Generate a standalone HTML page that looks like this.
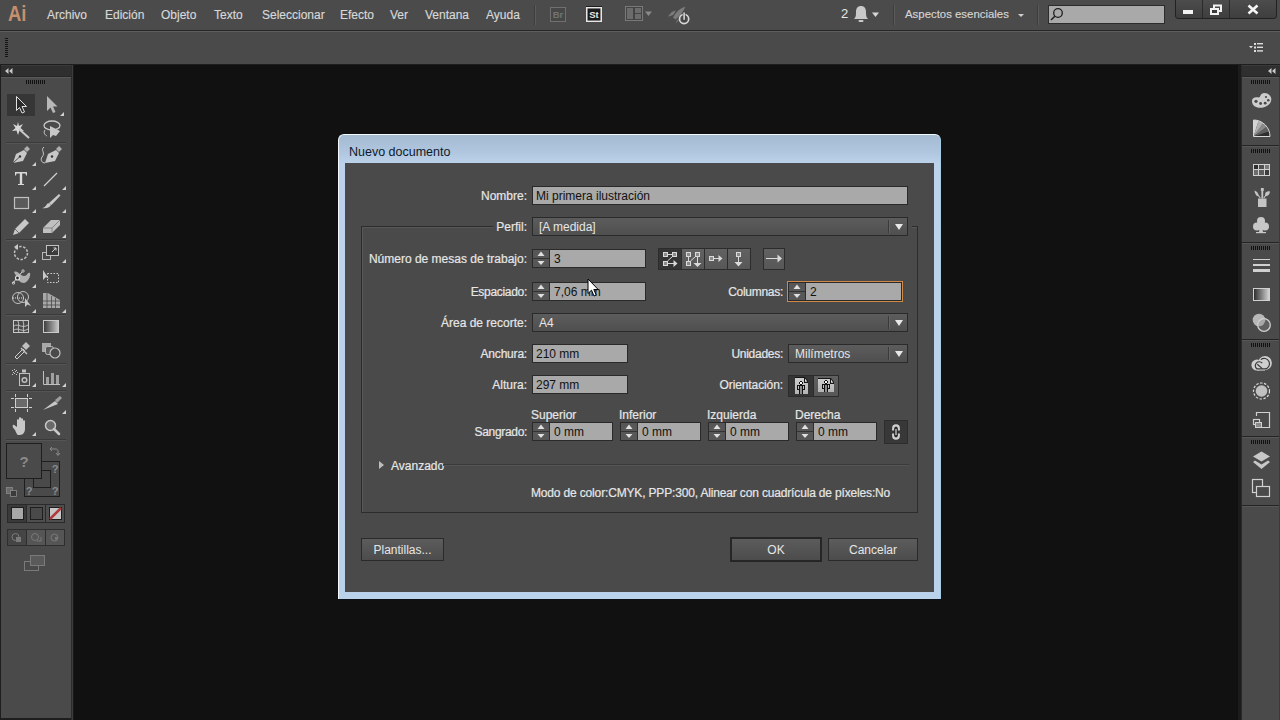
<!DOCTYPE html>
<html><head><meta charset="utf-8">
<style>
*{margin:0;padding:0;box-sizing:border-box}
html,body{width:1280px;height:720px;overflow:hidden;background:#111111;font-family:"Liberation Sans",sans-serif;font-size:12px;color:#e6e6e6}
.a{position:absolute}
#menubar{left:0;top:0;width:1280px;height:31px;background:#4b4b4b;border-bottom:1px solid #262626}
.mi{position:absolute;top:8px;font-size:12px;color:#d8d8d8;white-space:nowrap;-webkit-text-stroke:0.15px #d8d8d8}
#ctrl{left:0;top:31px;width:1280px;height:34px;background:#4a4a4a;border-top:1px solid #5e5e5e;border-bottom:1px solid #1e1e1e}
#lcol{left:0;top:65px;width:74px;height:655px;background:#1e1e1e}
#rcol{left:1238px;top:65px;width:42px;height:655px;background:#222}
/* dialog */
#dlg{left:338px;top:134px;width:603px;height:465px;background:linear-gradient(#a4bad2 0px,#b0c7df 18px,#bcd3eb 29px,#bad2ea 100%);border:1px solid #f4f8fc;border-right-color:#a4cce2;border-bottom:0;border-radius:6px 6px 0 0;box-shadow:0 0 0 1px #0c1014}
#dtitle{left:349px;top:145px;font-size:12.5px;color:#0e1a2c}
#dbody{left:345px;top:163px;width:589px;height:429px;background:#4a4a4a}
.lbl{position:absolute;font-size:12px;color:#e6e6e6;white-space:nowrap;text-align:right;-webkit-text-stroke:0.2px #e6e6e6}
.fld{position:absolute;background:#a9a9a9;border:1px solid #2a2a2a;color:#111;font-size:12px;padding-left:3px;padding-top:1px;line-height:17px;white-space:nowrap}
.dd{position:absolute;background:linear-gradient(#5c5c5c,#4f4f4f);border:1px solid #2a2a2a;color:#e6e6e6;font-size:12px;padding-left:6px;padding-top:1px;line-height:17px;white-space:nowrap}
.dd .sep{position:absolute;right:18px;top:2px;width:1px;height:13px;background:#3a3a3a;box-shadow:1px 0 0 #636363}
.dd .tri{position:absolute;right:4px;top:6px;width:0;height:0;border-left:4px solid transparent;border-right:4px solid transparent;border-top:6px solid #e8e8e8}
.sp{position:absolute;border:1px solid #2a2a2a;background:#a9a9a9;color:#111;height:19px;font-size:12px;line-height:17px;white-space:nowrap}
.sp .ar{position:absolute;left:0;top:0;width:17px;height:17px;background:#575757;border-right:1px solid #2e2e2e}
.sp .ar svg{position:absolute;left:0;top:0}
.sp span{position:absolute;left:21px;top:1px}
.btn{position:absolute;background:linear-gradient(#5c5c5c,#4c4c4c);border:1px solid #2a2a2a;color:#e6e6e6;font-size:12px;text-align:center;line-height:23px}
</style></head><body>
<div id="menubar" class="a"></div>
<div id="ctrl" class="a"></div>
<div id="lcol" class="a"></div>
<div id="rcol" class="a"></div>

<!-- menu -->
<div class="a" style="left:8px;top:2px;font-size:21.5px;color:#c6906e;font-weight:bold;transform:scaleX(0.86);transform-origin:0 0">Ai</div>
<div class="mi" style="left:47px">Archivo</div>
<div class="mi" style="left:105px">Edición</div>
<div class="mi" style="left:161px">Objeto</div>
<div class="mi" style="left:214px">Texto</div>
<div class="mi" style="left:262px">Seleccionar</div>
<div class="mi" style="left:340px">Efecto</div>
<div class="mi" style="left:390px">Ver</div>
<div class="mi" style="left:425px">Ventana</div>
<div class="mi" style="left:486px">Ayuda</div>
<div class="mi" style="left:905px;font-size:11.4px;top:8px;color:#d4d4d4">Aspectos esenciales</div>



<svg class="a" style="left:0;top:0" width="74" height="720">
 <rect x="1" y="65" width="70" height="1" fill="#3a3a3a"/>
 <rect x="1" y="66" width="70" height="10" fill="#2f2f2f"/>
 <rect x="1" y="76" width="70" height="1" fill="#262626"/>
 <rect x="1" y="77" width="70" height="641" fill="#4a4a4a"/>
 <rect x="1" y="77" width="70" height="1" fill="#5a5a5a"/>
 <rect x="71" y="65" width="1" height="655" fill="#2c2c2c"/>
 <rect x="72" y="65" width="1" height="655" fill="#3c3c3c"/>
 <rect x="73" y="65" width="1" height="655" fill="#1a1a1a"/>
 <path d="M5 71L8.5 68V74Z M9 71L12.5 68V74Z" fill="#c8c8c8"/>
 <rect x="26" y="80" width="1" height="4" fill="#111"/><rect x="28" y="80" width="1" height="4" fill="#111"/><rect x="30" y="80" width="1" height="4" fill="#111"/><rect x="32" y="80" width="1" height="4" fill="#111"/><rect x="34" y="80" width="1" height="4" fill="#111"/><rect x="36" y="80" width="1" height="4" fill="#111"/><rect x="38" y="80" width="1" height="4" fill="#111"/><rect x="40" y="80" width="1" height="4" fill="#111"/><rect x="42" y="80" width="1" height="4" fill="#111"/><rect x="44" y="80" width="1" height="4" fill="#111"/>
 <!-- selected tool bg -->
 <rect x="7" y="94" width="28" height="22" fill="#363636"/>
 <!-- selection -->
 <path d="M16.5 96.5V110.5L19.5 107.5L22 113L24.5 112L22 106.5H26.5Z" fill="#2a2a2a" stroke="#e0e0e0" stroke-width="1"/>
 <!-- direct selection -->
 <path d="M47 96V111L50.5 107.5L53 113L55.5 112L53 106.5H57.5Z" fill="#b8b8b8"/>
 <path d="M60 116L64 112V116Z" fill="#d0d0d0"/>
 <!-- magic wand -->
 <path d="M18 122L19 126L23 124L20.5 128L24 131L19.5 130.5L18 135L16.5 130.5L12 131L15.5 128L13 124L17 126Z" fill="#d8d8d8"/>
 <path d="M19 129L29 138" stroke="#c8c8c8" stroke-width="2"/>
 <!-- lasso -->
 <ellipse cx="52" cy="125.5" rx="8" ry="4.5" fill="none" stroke="#c8c8c8" stroke-width="1.3"/>
 <path d="M50 126V138L53 135L56 136L60 131Z" fill="#c8c8c8"/>
 <path d="M45 130C43 133 45 135 47 136" fill="none" stroke="#c8c8c8" stroke-width="1"/>
 <rect x="6" y="142" width="60" height="1" fill="#3a3a3a"/><rect x="6" y="143" width="60" height="1" fill="#555"/>
 <!-- pen -->
 <path d="M13 163L16 154L24 150L27 153L23 161Z" fill="#c8c8c8"/>
 <path d="M24 149L27 146L30 149L27 152Z" fill="#b0b0b0"/>
 <circle cx="20" cy="156.5" r="1.2" fill="#333"/><path d="M13 163L19.5 157" stroke="#333" stroke-width="0.8"/>
 <path d="M32 166L36 162V166Z" fill="#d0d0d0"/>
 <!-- curvature pen -->
 <path d="M45 163L48 154L56 150L59 153L55 161Z" fill="#c8c8c8"/>
 <path d="M56 149L59 146L62 149L59 152Z" fill="#b0b0b0"/>
 <circle cx="52" cy="156.5" r="1.2" fill="#333"/>
 <path d="M44 147C40 150 46 153 42 157C40 160 42 163 45 163" fill="none" stroke="#c8c8c8" stroke-width="1"/>
 <!-- type -->
 <path d="M15 172H27V175.5H26L25.5 173.5H22.2V184H24V185H18V184H19.8V173.5H16.5L16 175.5H15Z" fill="#d8d8d8"/>
 <path d="M32 190L36 186V190Z" fill="#d0d0d0"/>
 <!-- line -->
 <path d="M44 186L57 173" stroke="#d0d0d0" stroke-width="1.2"/>
 <path d="M62 190L66 186V190Z" fill="#d0d0d0"/>
 <!-- rectangle -->
 <rect x="14.5" y="197.5" width="14" height="11" fill="#5a5a5a" stroke="#c0c0c0" stroke-width="1.2"/>
 <path d="M32 213L36 209V213Z" fill="#d0d0d0"/>
 <!-- brush -->
 <path d="M49 203L59 194L60.5 195.5L51.5 205Z" fill="#c8c8c8"/>
 <path d="M42 208C44 208 46 206 47 204C48 203 50 203 51 205C50 207 47 209 42 208Z" fill="#c8c8c8"/>
 <path d="M62 213L66 209V213Z" fill="#d0d0d0"/>
 <!-- pencil -->
 <path d="M13 235L15 229L25 219L29 223L19 233Z" fill="#c8c8c8"/>
 <path d="M15 229L19 233" stroke="#555" stroke-width="0.8"/>
 <path d="M32 238L36 234V238Z" fill="#d0d0d0"/>
 <!-- eraser -->
 <path d="M43 228L51 220H60V225L52 233H43Z" fill="#c0c0c0"/>
 <path d="M43 228H52L60 220 M52 228V233" fill="none" stroke="#777" stroke-width="0.8"/>
 <path d="M62 238L66 234V238Z" fill="#d0d0d0"/>
 <rect x="6" y="239" width="60" height="1" fill="#3a3a3a"/><rect x="6" y="240" width="60" height="1" fill="#555"/>
 <!-- rotate -->
 <circle cx="21" cy="253" r="6.5" fill="none" stroke="#c0c0c0" stroke-width="1.5" stroke-dasharray="2.5 1.5"/>
 <path d="M14 247L18 244V250Z" fill="#c8c8c8"/>
 <path d="M32 263L36 259V263Z" fill="#d0d0d0"/>
 <!-- scale -->
 <rect x="42.5" y="252.5" width="8" height="7" fill="none" stroke="#b8b8b8" stroke-width="1"/>
 <rect x="46.5" y="245.5" width="12" height="10" fill="#3c3c3c" stroke="#c0c0c0" stroke-width="1"/>
 <path d="M52 252L56 248M53.5 248H56V250.5" fill="none" stroke="#d0d0d0" stroke-width="1"/>
 <path d="M62 263L66 259V263Z" fill="#d0d0d0"/>
 <!-- width / puppet -->
 <path d="M14 272C18 270 20 276 24 276C28 276 27 272 30 273C31 276 28 282 24 283C20 283 18 280 14 272Z" fill="#b0b0b0"/>
 <path d="M13 283L22 272" stroke="#d0d0d0" stroke-width="1"/>
 <circle cx="17.5" cy="278" r="2" fill="#333" stroke="#e0e0e0" stroke-width="1.2"/>
 <circle cx="13.5" cy="283" r="1.2" fill="none" stroke="#e0e0e0" stroke-width="0.8"/>
 <circle cx="23" cy="271" r="1.2" fill="none" stroke="#e0e0e0" stroke-width="0.8"/>
 <path d="M32 288L36 284V288Z" fill="#d0d0d0"/>
 <!-- free transform -->
 <rect x="47.5" y="273.5" width="11" height="9" fill="none" stroke="#d0d0d0" stroke-width="1" stroke-dasharray="1.5 1.5"/>
 <path d="M43 270V280L46 277L49 279Z" fill="#c8c8c8"/>
 <!-- shape builder -->
 <circle cx="18" cy="298" r="5.5" fill="none" stroke="#c0c0c0" stroke-width="1"/>
 <circle cx="23" cy="297" r="5.5" fill="none" stroke="#c0c0c0" stroke-width="1"/>
 <path d="M13 298H25" stroke="#e0e0e0" stroke-width="1" stroke-dasharray="1 1"/>
 <path d="M25 298V307L27.5 304.5L31 306Z" fill="#c8c8c8"/>
 <path d="M32 313L36 309V313Z" fill="#d0d0d0"/>
 <!-- perspective grid -->
 <path d="M43 293H48L60 300V308H43Z" fill="#a8a8a8"/>
 <path d="M47 293V308M51.5 296V308M55.5 298V308M43 301H60M43 305H60" stroke="#4a4a4a" stroke-width="0.8"/>
 <path d="M62 313L66 309V313Z" fill="#d0d0d0"/>
 <rect x="6" y="314" width="60" height="1" fill="#3a3a3a"/><rect x="6" y="315" width="60" height="1" fill="#555"/>
 <!-- mesh -->
 <rect x="13.5" y="320.5" width="15" height="12" fill="none" stroke="#c8c8c8" stroke-width="1"/>
 <path d="M14 326C18 323 22 329 28 325M14 330C19 327 22 333 28 329M18 321C20 325 17 328 19 333M23 321C25 325 22 329 24 333" fill="none" stroke="#c8c8c8" stroke-width="0.9"/>
 <!-- gradient -->
 <defs><linearGradient id="lg1" x1="0" x2="1"><stop offset="0" stop-color="#3a3a3a"/><stop offset="1" stop-color="#c8c8c8"/></linearGradient>
 <linearGradient id="lg2" x1="0" x2="1" y1="0" y2="1"><stop offset="0" stop-color="#333"/><stop offset="1" stop-color="#d0d0d0"/></linearGradient></defs>
 <rect x="43.5" y="320.5" width="15" height="12" fill="url(#lg1)" stroke="#c8c8c8" stroke-width="1"/>
 <!-- eyedropper -->
 <path d="M15 357L23 349L25 351L17 359Z" fill="none" stroke="#d0d0d0" stroke-width="1"/>
 <path d="M22 346L26 342L30 346L26 350Z" fill="#c0c0c0"/>
 <path d="M21 348L27 354" stroke="#c0c0c0" stroke-width="1.5"/>
 <path d="M32 362L36 358V362Z" fill="#d0d0d0"/>
 <!-- blend -->
 <rect x="42" y="343" width="9" height="9" fill="#a8a8a8"/>
 <rect x="45.5" y="346.5" width="8" height="8" rx="2" fill="#5a5a5a" stroke="#b8b8b8" stroke-width="1"/>
 <circle cx="55" cy="353" r="5" fill="#4a4a4a" stroke="#c0c0c0" stroke-width="1.2"/>
 <rect x="6" y="363" width="60" height="1" fill="#3a3a3a"/><rect x="6" y="364" width="60" height="1" fill="#555"/>
 <!-- symbol sprayer -->
 <path d="M12 370h1v1h-1zM14 369h1v1h-1zM16 370h1v1h-1zM13 372h1v1h-1zM15 371h1v1h-1zM17 372h1v1h-1zM12 374h1v1h-1zM14 373h1v1h-1zM16 374h1v1h-1z" fill="#c8c8c8"/>
 <rect x="22" y="369.5" width="4" height="3" fill="#c0c0c0"/>
 <rect x="19.5" y="373.5" width="10" height="12" fill="none" stroke="#c0c0c0" stroke-width="1"/>
 <circle cx="24.5" cy="380" r="2.3" fill="none" stroke="#c0c0c0" stroke-width="1.5"/>
 <path d="M32 387L36 383V387Z" fill="#d0d0d0"/>
 <!-- column graph -->
 <path d="M43.5 371V384.5H60" fill="none" stroke="#c0c0c0" stroke-width="1"/>
 <rect x="46" y="377" width="3" height="7" fill="#a0a0a0"/><rect x="51" y="373" width="3" height="11" fill="#a0a0a0"/><rect x="56" y="375" width="3" height="9" fill="#a0a0a0"/>
 <path d="M62 387L66 383V387Z" fill="#d0d0d0"/>
 <rect x="6" y="390" width="60" height="1" fill="#3a3a3a"/><rect x="6" y="391" width="60" height="1" fill="#555"/>
 <!-- artboard -->
 <rect x="15.5" y="398.5" width="12" height="9" fill="#6a6a6a" stroke="#d0d0d0" stroke-width="1"/>
 <path d="M15.5 394V397M27.5 394V397M15.5 409V412M27.5 409V412M11 398.5H14M29 398.5H32M11 407.5H14M29 407.5H32" stroke="#d0d0d0" stroke-width="1"/>
 <!-- slice -->
 <path d="M43 410L55 401L58 404Z" fill="#c8c8c8"/>
 <path d="M55 400L60 396L62 398L57 403Z" fill="#a0a0a0"/>
 <path d="M62 414L66 410V414Z" fill="#d0d0d0"/>
 <!-- hand -->
 <path d="M15 430C13 428 12 426 13 425C14 424 15 426 17 427V420C17 419 19 419 19 420V425V418C19 417 21 417 21 418V425V419C21 418 23 418 23 419V426V421C23 420 25 420 25 421V429C25 432 23 435 20 435H18C17 435 16 432 15 430Z" fill="#c8c8c8"/>
 <path d="M32 436L36 432V436Z" fill="#d0d0d0"/>
 <!-- zoom -->
 <circle cx="50.5" cy="425.5" r="5" fill="#6a6a6a" stroke="#c8c8c8" stroke-width="1.5"/>
 <path d="M54 429L59 434" stroke="#c8c8c8" stroke-width="2.5" stroke-linecap="round"/>
 <rect x="6" y="439" width="60" height="1" fill="#3a3a3a"/><rect x="6" y="440" width="60" height="1" fill="#555"/>
 <!-- fill/stroke -->
 <rect x="24.5" y="461.5" width="35" height="35" fill="#4a4a4a" stroke="#1e1e1e" stroke-width="1"/>
 <rect x="33.5" y="470.5" width="17" height="17" fill="#4a4a4a" stroke="#1e1e1e" stroke-width="1"/>
 <rect x="6.5" y="443.5" width="35" height="35" fill="#4a4a4a" stroke="#1e1e1e" stroke-width="1"/>
 <text x="24" y="467" font-family="Liberation Sans" font-size="15" font-weight="bold" fill="#8a8a8a" text-anchor="middle">?</text>
 <text x="55" y="473" font-family="Liberation Sans" font-size="11" font-weight="bold" fill="#8a8a8a" text-anchor="middle">?</text>
 <text x="29" y="495" font-family="Liberation Sans" font-size="11" font-weight="bold" fill="#8a8a8a" text-anchor="middle">?</text>
 <text x="55" y="495" font-family="Liberation Sans" font-size="11" font-weight="bold" fill="#8a8a8a" text-anchor="middle">?</text>
 <path d="M52 447L50 449L52 451M50.5 449H56C57 449 58 450 58 451V455M56 453L58 455.5L60 453" fill="none" stroke="#8a8a8a" stroke-width="1"/>
 <rect x="6.5" y="487.5" width="6" height="6" fill="#6a6a6a" stroke="#8a8a8a" stroke-width="0.8"/>
 <rect x="10.5" y="490.5" width="6" height="6" fill="#3a3a3a" stroke="#8a8a8a" stroke-width="0.8"/>
 <!-- color buttons -->
 <rect x="7" y="504" width="58" height="19" fill="#2a2a2a"/>
 <rect x="8" y="505" width="18" height="17" fill="#3a3a3a"/>
 <rect x="27" y="505" width="18" height="17" fill="#4e4e4e"/>
 <rect x="46" y="505" width="18" height="17" fill="#4e4e4e"/>
 <rect x="11.5" y="507.5" width="12" height="12" fill="#a8a8a8" stroke="#1e1e1e" stroke-width="1"/>
 <rect x="30.5" y="507.5" width="12" height="12" fill="#4a4a4a" stroke="#1e1e1e" stroke-width="1"/>
 <rect x="49.5" y="507.5" width="12" height="12" fill="#c8c8c8" stroke="#1e1e1e" stroke-width="1"/>
 <path d="M50 519L61 508" stroke="#b03a3a" stroke-width="2.5"/>
 <!-- draw modes -->
 <rect x="7" y="529" width="58" height="17" fill="#2e2e2e"/>
 <rect x="8" y="530" width="18" height="15" fill="#454545"/>
 <rect x="27" y="530" width="18" height="15" fill="#555"/>
 <rect x="46" y="530" width="18" height="15" fill="#555"/>
 <circle cx="15.5" cy="537" r="3.5" fill="none" stroke="#7a7a7a" stroke-width="1"/><rect x="16" y="537" width="5" height="5" fill="#7a7a7a"/>
 <circle cx="35" cy="537" r="3.5" fill="none" stroke="#7a7a7a" stroke-width="1"/><path d="M37 541H41V537" fill="none" stroke="#7a7a7a" stroke-width="1"/>
 <circle cx="54.5" cy="537.5" r="3.5" fill="none" stroke="#7a7a7a" stroke-width="1"/><rect x="55" y="537" width="2.5" height="2.5" fill="#7a7a7a"/>
 <!-- screen mode -->
 <rect x="24.5" y="561.5" width="14" height="9" fill="#4a4a4a" stroke="#7a7a7a" stroke-width="1"/>
 <rect x="30.5" y="555.5" width="14" height="10" fill="#5a5a5a" stroke="#7a7a7a" stroke-width="1"/>
 <rect x="1" y="718" width="70" height="2" fill="#1e1e1e"/>
</svg>

<svg class="a" style="left:1236px;top:0" width="44" height="720">
 <g transform="translate(-1236,0)">
 <rect x="1238" y="65" width="3" height="655" fill="#1c1c1c"/>
 <rect x="1241" y="65" width="1" height="655" fill="#2a2a2a"/>
 <rect x="1242" y="65" width="38" height="1" fill="#3a3a3a"/>
 <rect x="1242" y="66" width="38" height="10" fill="#2f2f2f"/>
 <rect x="1242" y="76" width="38" height="1" fill="#262626"/>
 <path d="M1268 71L1271.5 68V74Z M1272 71L1275.5 68V74Z" fill="#c8c8c8"/>
 <rect x="1242" y="77" width="37" height="643" fill="#4a4a4a"/>
 <rect x="1279" y="77" width="1" height="643" fill="#3a3a3a"/>
 <rect x="1242" y="77" width="37" height="1" fill="#5a5a5a"/>
 <rect x="1242" y="145" width="37" height="1" fill="#242424"/><rect x="1242" y="146" width="37" height="1" fill="#575757"/>
 <rect x="1242" y="242" width="37" height="1" fill="#242424"/><rect x="1242" y="243" width="37" height="1" fill="#575757"/>
 <rect x="1242" y="339" width="37" height="1" fill="#242424"/><rect x="1242" y="340" width="37" height="1" fill="#575757"/>
 <rect x="1242" y="436" width="37" height="1" fill="#242424"/><rect x="1242" y="437" width="37" height="1" fill="#575757"/>
 <rect x="1242" y="505" width="37" height="1" fill="#242424"/><rect x="1242" y="506" width="37" height="1" fill="#575757"/>
 <rect x="1251" y="80" width="1" height="4" fill="#111"/><rect x="1253" y="80" width="1" height="4" fill="#111"/><rect x="1255" y="80" width="1" height="4" fill="#111"/><rect x="1257" y="80" width="1" height="4" fill="#111"/><rect x="1259" y="80" width="1" height="4" fill="#111"/><rect x="1261" y="80" width="1" height="4" fill="#111"/><rect x="1263" y="80" width="1" height="4" fill="#111"/><rect x="1265" y="80" width="1" height="4" fill="#111"/><rect x="1267" y="80" width="1" height="4" fill="#111"/><rect x="1269" y="80" width="1" height="4" fill="#111"/><rect x="1251" y="149" width="1" height="4" fill="#111"/><rect x="1253" y="149" width="1" height="4" fill="#111"/><rect x="1255" y="149" width="1" height="4" fill="#111"/><rect x="1257" y="149" width="1" height="4" fill="#111"/><rect x="1259" y="149" width="1" height="4" fill="#111"/><rect x="1261" y="149" width="1" height="4" fill="#111"/><rect x="1263" y="149" width="1" height="4" fill="#111"/><rect x="1265" y="149" width="1" height="4" fill="#111"/><rect x="1267" y="149" width="1" height="4" fill="#111"/><rect x="1269" y="149" width="1" height="4" fill="#111"/><rect x="1251" y="246" width="1" height="4" fill="#111"/><rect x="1253" y="246" width="1" height="4" fill="#111"/><rect x="1255" y="246" width="1" height="4" fill="#111"/><rect x="1257" y="246" width="1" height="4" fill="#111"/><rect x="1259" y="246" width="1" height="4" fill="#111"/><rect x="1261" y="246" width="1" height="4" fill="#111"/><rect x="1263" y="246" width="1" height="4" fill="#111"/><rect x="1265" y="246" width="1" height="4" fill="#111"/><rect x="1267" y="246" width="1" height="4" fill="#111"/><rect x="1269" y="246" width="1" height="4" fill="#111"/><rect x="1251" y="343" width="1" height="4" fill="#111"/><rect x="1253" y="343" width="1" height="4" fill="#111"/><rect x="1255" y="343" width="1" height="4" fill="#111"/><rect x="1257" y="343" width="1" height="4" fill="#111"/><rect x="1259" y="343" width="1" height="4" fill="#111"/><rect x="1261" y="343" width="1" height="4" fill="#111"/><rect x="1263" y="343" width="1" height="4" fill="#111"/><rect x="1265" y="343" width="1" height="4" fill="#111"/><rect x="1267" y="343" width="1" height="4" fill="#111"/><rect x="1269" y="343" width="1" height="4" fill="#111"/><rect x="1251" y="440" width="1" height="4" fill="#111"/><rect x="1253" y="440" width="1" height="4" fill="#111"/><rect x="1255" y="440" width="1" height="4" fill="#111"/><rect x="1257" y="440" width="1" height="4" fill="#111"/><rect x="1259" y="440" width="1" height="4" fill="#111"/><rect x="1261" y="440" width="1" height="4" fill="#111"/><rect x="1263" y="440" width="1" height="4" fill="#111"/><rect x="1265" y="440" width="1" height="4" fill="#111"/><rect x="1267" y="440" width="1" height="4" fill="#111"/><rect x="1269" y="440" width="1" height="4" fill="#111"/>
 <!-- palette -->
 <path d="M1252 101C1252 98.5 1254 97.3 1256.5 97.3C1258.5 97.3 1259.3 97.8 1260 96.5C1260.8 94 1262.5 93 1264.5 93C1268.5 93 1271.3 96 1271.3 99.5C1271.3 103 1268 106 1264 107.3C1261 108.2 1257.5 108 1255 106.5C1253 105.3 1252 103.3 1252 101Z" fill="#cdcdcd"/>
 <circle cx="1256" cy="101.3" r="1.6" fill="#4a4a4a"/><circle cx="1260.6" cy="103.5" r="1.4" fill="#4a4a4a"/><circle cx="1265.2" cy="103.2" r="1.4" fill="#4a4a4a"/><circle cx="1268.3" cy="100.3" r="1.3" fill="#4a4a4a"/><circle cx="1266" cy="97" r="1.1" fill="#4a4a4a"/>
 <!-- color guide -->
 <path d="M1253.5 136.5L1253.50 120.00A16.5 16.5 0 0 1 1258.60 120.81Z" fill="#d4d4d4"/><path d="M1253.5 136.5L1258.60 120.81A16.5 16.5 0 0 1 1263.20 123.15Z" fill="#b0b0b0"/><path d="M1253.5 136.5L1263.20 123.15A16.5 16.5 0 0 1 1266.85 126.80Z" fill="#8a8a8a"/><path d="M1253.5 136.5L1266.85 126.80A16.5 16.5 0 0 1 1269.19 131.40Z" fill="#606060"/><path d="M1253.5 136.5L1269.19 131.40A16.5 16.5 0 0 1 1270.00 136.50Z" fill="#2e2e2e"/>
 <path d="M1253.5 120.0V136.5H1270.0A16.5 16.5 0 0 0 1253.5 120.0" fill="none" stroke="#d8d8d8" stroke-width="1"/>
 <!-- swatches -->
 <g shape-rendering="crispEdges">
 <rect x="1253" y="164" width="17" height="12" fill="#d0d0d0"/>
 <rect x="1254" y="165" width="4" height="4" fill="#2e2e2e"/><rect x="1259" y="165" width="5" height="4" fill="#505050"/><rect x="1265" y="165" width="4" height="4" fill="#7a7a7a"/>
 <rect x="1254" y="170" width="4" height="5" fill="#6c6c6c"/><rect x="1259" y="170" width="5" height="5" fill="#5c5c5c"/><rect x="1265" y="170" width="4" height="5" fill="#3c3c3c"/>
 </g>
 <!-- brushes -->
 <rect x="1258" y="198.5" width="8.5" height="8.5" fill="#c4c4c4"/>
 <path d="M1260.3 198L1257.5 194.5" stroke="#c4c4c4" stroke-width="1.2"/>
 <path d="M1254.5 190.5C1256.5 191 1258.5 193 1258.5 195.5L1257 196.2C1255.5 194.5 1254.5 192.5 1254.5 190.5Z" fill="#c4c4c4"/>
 <rect x="1261.4" y="188" width="1.8" height="10.5" fill="#c4c4c4"/><rect x="1260.9" y="188" width="2.8" height="3" fill="#c4c4c4"/>
 <path d="M1263.8 198L1266 195" stroke="#c4c4c4" stroke-width="1.2"/>
 <path d="M1265 194C1265.5 192 1267.5 191 1270 191.5C1270 194 1268 196 1266 196.2Z" fill="#c4c4c4"/>
 <!-- club -->
 <circle cx="1261" cy="221" r="4" fill="#c8c8c8"/><circle cx="1257" cy="226.5" r="4" fill="#c8c8c8"/><circle cx="1265" cy="226.5" r="4" fill="#c8c8c8"/><circle cx="1261" cy="225" r="2.5" fill="#c8c8c8"/>
 <path d="M1260 226H1262L1263 232H1259Z" fill="#c8c8c8"/><rect x="1256" y="232" width="10" height="1.2" fill="#c8c8c8"/>
 <!-- stroke -->
 <rect x="1253" y="259" width="17" height="1" fill="#d0d0d0"/><rect x="1253" y="264" width="17" height="2" fill="#d0d0d0"/><rect x="1253" y="269" width="17" height="3" fill="#d0d0d0"/>
 <!-- gradient -->
 <rect x="1253.5" y="288.5" width="16" height="12" fill="url(#rg2)" stroke="#d0d0d0" stroke-width="1"/>
 <defs><linearGradient id="rg2" x1="0" x2="1"><stop offset="0" stop-color="#2a2a2a"/><stop offset="1" stop-color="#d8d8d8"/></linearGradient></defs>
 <!-- transparency -->
 <circle cx="1259" cy="320" r="6.3" fill="#b8b8b8"/>
 <circle cx="1264" cy="325" r="6.3" fill="#8a8a8a" fill-opacity="0.35" stroke="#d0d0d0" stroke-width="1.3"/>
 <!-- cc -->
 <circle cx="1257" cy="365" r="5.6" fill="#cfcfcf"/><circle cx="1265" cy="363" r="6.9" fill="#cfcfcf"/><rect x="1257" y="364" width="8" height="6.6" fill="#cfcfcf"/>
 <path d="M1262.2 363.2A3.9 3.9 0 1 0 1257 368.9H1265A5.3 5.3 0 1 0 1260.8 359.6" fill="none" stroke="#3a3a3a" stroke-width="1.2"/>
 <path d="M1257.3 364.2L1262.3 368.6" stroke="#3a3a3a" stroke-width="1.2"/>
 <!-- appearance -->
 <circle cx="1261.5" cy="391" r="8" fill="none" stroke="#d8d8d8" stroke-width="1.2" stroke-dasharray="2.5 1.5"/>
 <circle cx="1261.5" cy="391" r="5.8" fill="#c0c0c0"/>
 <!-- transform -->
 <path d="M1256.5 416V412.5H1269.5V427.5H1257.5V424" fill="none" stroke="#d0d0d0" stroke-width="1.2"/>
 <rect x="1253.5" y="419.5" width="6" height="5" fill="none" stroke="#d0d0d0" stroke-width="1.2"/>
 <rect x="1255.5" y="422.5" width="6" height="5" fill="#8a8a8a" stroke="#d0d0d0" stroke-width="1"/>
 <!-- layers -->
 <path d="M1261.5 451.5L1270 456.5L1261.5 461.5L1253 456.5Z" fill="#c8c8c8"/>
 <path d="M1255 460.5L1261.5 464.5L1268 460.5L1270 462L1261.5 469L1253 462Z" fill="#c8c8c8"/>
 <!-- artboards -->
 <rect x="1252.5" y="479.5" width="10" height="13" fill="#4a4a4a" stroke="#d0d0d0" stroke-width="1.2"/>
 <rect x="1256.5" y="486.5" width="13" height="10" fill="#4a4a4a" stroke="#d0d0d0" stroke-width="1.2"/>
 </g>
</svg>

<!-- menu bar icons -->
<div class="a" style="left:534px;top:5px;width:1px;height:20px;background:#3c3c3c;box-shadow:1px 0 0 #5c5c5c"></div>
<div class="a" style="left:550px;top:7px;width:16px;height:15px;border:1px solid #707070;background:#474747;color:#737373;font-size:9.5px;font-weight:bold;line-height:13px;text-align:center">Br</div>
<div class="a" style="left:586px;top:7px;width:16px;height:15px;border:1px solid #e6e6e6;box-shadow:inset 0 0 0 0.6px #cfcfcf,0 -1px 0 #1e1e1e;background:#1c1c1c;color:#e8e8e8;font-size:9.5px;font-weight:bold;line-height:13px;text-align:center">St</div>
<svg class="a" style="left:625px;top:6px" width="30" height="16">
 <rect x="0.5" y="0.5" width="17" height="14" fill="#444" stroke="#7a7a7a"/>
 <rect x="2" y="2" width="6" height="11" fill="#6c6c6c"/><rect x="10" y="2" width="6" height="5" fill="#6c6c6c"/><rect x="10" y="8" width="6" height="5" fill="#6c6c6c"/>
 <path d="M20 5.5H27L23.5 10Z" fill="#8a8a8a"/>
</svg>
<svg class="a" style="left:666px;top:5px" width="26" height="21">
 <path d="M2 11.5C4 8.5 6.5 6 10 5.2L7.5 9.5C6 10.5 4 11.3 2 11.5Z" fill="#7c7c7c"/>
 <path d="M19.2 1.8C15 2.5 10 7 7 12.5L9.5 14.5C14 11 17.5 7 19.2 1.8Z" fill="#7c7c7c"/>
 <path d="M10 18.5L11 15L13 14.5Z" fill="#7c7c7c"/>
 <circle cx="18.1" cy="14" r="4.6" fill="#4b4b4b" stroke="#d8d8d8" stroke-width="1.7"/>
 <rect x="16.7" y="6.6" width="2.8" height="9" fill="#3a3a3a"/>
 <rect x="17.3" y="7.4" width="1.6" height="7.4" fill="#d8d8d8"/>
</svg>
<div class="a" style="left:841px;top:6px;font-size:13px;color:#e8e8e8">2</div>
<svg class="a" style="left:852px;top:5px" width="28" height="18">
 <path d="M2 14C4 12 4 10 4 7C4 3 6 1 9 1C12 1 14 3 14 7C14 10 14 12 16 14Z" fill="#c9c9c9"/>
 <rect x="6.5" y="15" width="5" height="2" rx="1" fill="#c9c9c9"/>
 <path d="M20 7.5H27L23.5 12Z" fill="#d6d6d6"/>
</svg>
<div class="a" style="left:893px;top:5px;width:1px;height:20px;background:#3c3c3c;box-shadow:1px 0 0 #5c5c5c"></div>
<svg class="a" style="left:1017px;top:13px" width="8" height="5"><path d="M1 1H7L4 4Z" fill="#cfcfcf"/></svg>
<div class="a" style="left:1037px;top:5px;width:1px;height:20px;background:#3c3c3c;box-shadow:1px 0 0 #5c5c5c"></div>
<div class="a" style="left:1048px;top:5px;width:117px;height:19px;background:#a9a9a9;border:1px solid #2c2c2c"></div>
<svg class="a" style="left:1049px;top:6px" width="18" height="17">
 <circle cx="9" cy="7" r="4.3" fill="none" stroke="#1e1e1e" stroke-width="1.3"/>
 <path d="M5.8 10.2L2 14" stroke="#1e1e1e" stroke-width="1.5"/>
</svg>
<div class="a" style="left:1175px;top:-3px;width:102px;height:22px;border:1px solid #222;border-radius:0 0 3px 3px;background:linear-gradient(#4e4e4e,#3e3e3e)"></div>
<div class="a" style="left:1202px;top:0px;width:1px;height:18px;background:#2a2a2a"></div>
<div class="a" style="left:1229px;top:0px;width:1px;height:18px;background:#2a2a2a"></div>
<div class="a" style="left:1183px;top:10px;width:10px;height:4px;background:#f2f2f2"></div>
<svg class="a" style="left:1209px;top:4px" width="14" height="12">
 <path d="M5 4V1.5H12V7H9.5" fill="none" stroke="#f0f0f0" stroke-width="2"/>
 <rect x="2" y="5" width="7" height="5" fill="#3a3a3a" stroke="#f0f0f0" stroke-width="2"/>
</svg>
<svg class="a" style="left:1246px;top:3px" width="14" height="12">
 <path d="M2.5 2.5L11.5 10.5 M11.5 2.5L2.5 10.5" stroke="#f4f4f4" stroke-width="2.6"/>
</svg>
<!-- control bar -->
<div class="a" style="left:5px;top:38px;width:3px;height:19px;background:repeating-linear-gradient(#141414 0 1px,transparent 1px 2px)"></div>
<svg class="a" style="left:1248px;top:42px" width="16" height="10">
 <path d="M1 4H5L3 6.2Z" fill="#dcdcdc"/>
 <rect x="6" y="1" width="2" height="2" fill="#dcdcdc"/><rect x="6" y="4.5" width="2" height="2" fill="#dcdcdc"/><rect x="6" y="8" width="2" height="2" fill="#dcdcdc"/>
 <rect x="9" y="1" width="6" height="1.4" fill="#dcdcdc"/><rect x="9" y="4.6" width="6" height="1.4" fill="#dcdcdc"/><rect x="9" y="8.2" width="6" height="1.4" fill="#dcdcdc"/>
</svg>

<!-- dialog -->
<div id="dlg" class="a"></div>
<div id="dtitle" class="a">Nuevo documento</div>
<div id="dbody" class="a"></div>


<!-- group box -->
<div class="a" style="left:361px;top:226px;width:557px;height:287px;border:1px solid #2c2c2c;box-shadow:inset 1px 1px 0 #575757"></div>
<div class="a" style="left:493px;top:222px;width:419px;height:8px;background:#4a4a4a"></div>

<div class="lbl" style="right:753px;top:189px">Nombre:</div>
<div class="fld" style="left:532px;top:186px;width:376px;height:19px">Mi primera ilustración</div>

<div class="lbl" style="right:753px;top:220px">Perfil:</div>
<div class="dd" style="left:532px;top:217px;width:376px;height:19px">[A medida]<i class="sep"></i><i class="tri"></i></div>

<div class="lbl" style="right:753px;top:252px">Número de mesas de trabajo:</div>
<div class="sp" style="left:532px;top:249px;width:114px"><div class="ar"><svg width="16" height="17"><path d="M4.5 6 L8 1.5 L11.5 6Z M4.5 11 L11.5 11 L8 15Z" fill="#e0e0e0"/><rect x="0" y="8" width="16" height="1" fill="#333"/></svg></div><span>3</span></div>

<div class="lbl" style="right:753px;top:285px;letter-spacing:-0.3px">Espaciado:</div>
<div class="sp" style="left:532px;top:282px;width:114px"><div class="ar"><svg width="16" height="17"><path d="M4.5 6 L8 1.5 L11.5 6Z M4.5 11 L11.5 11 L8 15Z" fill="#e0e0e0"/><rect x="0" y="8" width="16" height="1" fill="#333"/></svg></div><span>7,06 mm</span></div>

<div class="lbl" style="right:497px;top:285px;letter-spacing:-0.28px">Columnas:</div>
<div class="a" style="left:787px;top:281px;width:116px;height:21px;border:1px solid #cf8a48"></div><div class="sp" style="left:788px;top:282px;width:114px"><div class="ar"><svg width="16" height="17"><path d="M4.5 6 L8 1.5 L11.5 6Z M4.5 11 L11.5 11 L8 15Z" fill="#e0e0e0"/><rect x="0" y="8" width="16" height="1" fill="#333"/></svg></div><span>2</span></div>

<div class="lbl" style="right:753px;top:316px">Área de recorte:</div>
<div class="dd" style="left:532px;top:313px;width:376px;height:19px">A4<i class="sep"></i><i class="tri"></i></div>

<div class="lbl" style="right:753px;top:347px;letter-spacing:-0.2px">Anchura:</div>
<div class="fld" style="left:532px;top:344px;width:96px;height:19px">210 mm</div>
<div class="lbl" style="right:497px;top:347px;letter-spacing:-0.27px">Unidades:</div>
<div class="dd" style="left:788px;top:344px;width:120px;height:19px">Milímetros<i class="sep"></i><i class="tri"></i></div>

<div class="lbl" style="right:753px;top:378px">Altura:</div>
<div class="fld" style="left:532px;top:375px;width:96px;height:19px">297 mm</div>
<div class="lbl" style="right:497px;top:378px;letter-spacing:-0.1px">Orientación:</div>

<div class="lbl" style="left:531px;top:408px">Superior</div>
<div class="lbl" style="left:619px;top:408px">Inferior</div>
<div class="lbl" style="left:707px;top:408px">Izquierda</div>
<div class="lbl" style="left:795px;top:408px">Derecha</div>
<div class="lbl" style="right:753px;top:425px;letter-spacing:-0.33px">Sangrado:</div>
<div class="sp" style="left:532px;top:422px;width:81px"><div class="ar"><svg width="16" height="17"><path d="M4.5 6 L8 1.5 L11.5 6Z M4.5 11 L11.5 11 L8 15Z" fill="#e0e0e0"/><rect x="0" y="8" width="16" height="1" fill="#333"/></svg></div><span>0 mm</span></div>
<div class="sp" style="left:620px;top:422px;width:81px"><div class="ar"><svg width="16" height="17"><path d="M4.5 6 L8 1.5 L11.5 6Z M4.5 11 L11.5 11 L8 15Z" fill="#e0e0e0"/><rect x="0" y="8" width="16" height="1" fill="#333"/></svg></div><span>0 mm</span></div>
<div class="sp" style="left:708px;top:422px;width:81px"><div class="ar"><svg width="16" height="17"><path d="M4.5 6 L8 1.5 L11.5 6Z M4.5 11 L11.5 11 L8 15Z" fill="#e0e0e0"/><rect x="0" y="8" width="16" height="1" fill="#333"/></svg></div><span>0 mm</span></div>
<div class="sp" style="left:796px;top:422px;width:81px"><div class="ar"><svg width="16" height="17"><path d="M4.5 6 L8 1.5 L11.5 6Z M4.5 11 L11.5 11 L8 15Z" fill="#e0e0e0"/><rect x="0" y="8" width="16" height="1" fill="#333"/></svg></div><span>0 mm</span></div>
<div class="a" style="left:884px;top:420px;width:24px;height:24px;background:#383838;border:1px solid #2e2e2e"></div>

<!-- avanzado -->
<div class="a" style="left:379px;top:461px;border-top:4px solid transparent;border-bottom:4px solid transparent;border-left:5px solid #bdbdbd"></div>
<div class="lbl" style="left:391px;top:459px">Avanzado</div>
<div class="a" style="left:443px;top:464px;width:466px;height:1px;background:#3a3a3a;box-shadow:0 1px 0 #555"></div>
<div class="lbl" style="left:531px;top:486px;letter-spacing:-0.16px">Modo de color:CMYK, PPP:300, Alinear con cuadrícula de píxeles:No</div>

<div class="btn" style="left:361px;top:538px;width:83px;height:23px">Plantillas...</div>
<div class="btn" style="left:730px;top:537px;width:92px;height:25px;border:2px solid #262626;line-height:22px">OK</div>
<div class="btn" style="left:828px;top:538px;width:90px;height:23px">Cancelar</div>

<!-- artboard layout icons -->
<div class="a" style="left:658px;top:248px;width:93px;height:22px;background:#2c2c2c"></div>
<div class="a" style="left:659px;top:249px;width:22px;height:20px;background:#353535"></div>
<div class="a" style="left:682px;top:249px;width:22px;height:20px;background:linear-gradient(#616161,#575757)"></div>
<div class="a" style="left:705px;top:249px;width:22px;height:20px;background:linear-gradient(#616161,#575757)"></div>
<div class="a" style="left:728px;top:249px;width:22px;height:20px;background:linear-gradient(#616161,#575757)"></div>
<div class="a" style="left:763px;top:248px;width:22px;height:22px;background:linear-gradient(#616161,#575757);border:1px solid #2c2c2c"></div>
<svg class="a" style="left:658px;top:248px" width="130" height="22">
 <g fill="#8c8c8c" stroke="#dadada" stroke-width="1" shape-rendering="crispEdges">
  <rect x="5.5" y="4.5" width="4" height="4"/><rect x="14.5" y="4.5" width="4" height="4"/><rect x="5.5" y="13.5" width="4" height="4"/>
  <rect x="28.5" y="4.5" width="4" height="4"/><rect x="37.5" y="4.5" width="4" height="4"/><rect x="28.5" y="13.5" width="4" height="4"/>
  <rect x="51.5" y="8.5" width="4" height="4"/>
  <rect x="78.5" y="4.5" width="4" height="4"/>
 </g>
 <g stroke="#dadada" stroke-width="1" fill="none">
  <path d="M10 6.5H14 M9.5 13L14 9 M10 15.5H16 M30.5 9V13 M32.5 13L37 9 M39.5 9V16 M56 10.5H61 M80.5 9V14 M108 10.5H120"/>
 </g>
 <g fill="#dadada">
  <path d="M15.5 12L19.5 15.5L15.5 19Z M35.5 15H43.5L39.5 19Z M60.5 7L64.5 10.5L60.5 14Z M76.5 14H84.5L80.5 18.5Z M119.5 6.5L124 10.5L119.5 14.5Z"/>
 </g>
</svg>

<!-- orientation -->
<div class="a" style="left:788px;top:375px;width:51px;height:22px;background:#2c2c2c"></div>
<div class="a" style="left:789px;top:376px;width:24px;height:20px;background:#353535"></div>
<div class="a" style="left:814px;top:376px;width:24px;height:20px;background:linear-gradient(#616161,#575757)"></div>
<svg class="a" style="left:788px;top:375px" width="51" height="22" shape-rendering="crispEdges">
 <defs><linearGradient id="pg" x1="0" x2="0" y1="0" y2="1"><stop offset="0" stop-color="#cdcdcd"/><stop offset="1" stop-color="#b4b4b4"/></linearGradient></defs>
 <path d="M7 3H16L20 7V19H7Z" fill="url(#pg)"/>
 <rect x="7" y="2" width="10" height="1" fill="#161616"/>
 
 <path d="M16 2H17L20 6V8H16Z" fill="#161616" shape-rendering="auto"/><path d="M17 3.5L19.3 6.8H17Z" fill="#e8e8e8" shape-rendering="auto"/>
 
 <rect x="12" y="6" width="2" height="1" fill="#111"/>
 <rect x="12" y="9" width="2" height="1" fill="#111"/>
 <rect x="11" y="7" width="1" height="2" fill="#111"/>
 <rect x="14" y="7" width="1" height="2" fill="#111"/>
 <rect x="12" y="7" width="2" height="2" fill="#fff"/>
 <rect x="9" y="10" width="8" height="1" fill="#111"/>
 <rect x="9" y="10" width="1" height="5" fill="#111"/>
 <rect x="16" y="10" width="1" height="5" fill="#111"/>
 <rect x="10" y="11" width="1" height="3" fill="#c4c4c4"/>
 <rect x="15" y="11" width="1" height="3" fill="#c4c4c4"/>
 <rect x="9" y="14" width="3" height="1" fill="#111"/>
 <rect x="14" y="14" width="3" height="1" fill="#111"/>
 <rect x="11" y="10" width="1" height="9" fill="#111"/>
 <rect x="14" y="10" width="1" height="9" fill="#111"/>
 <rect x="12" y="11" width="2" height="8" fill="#8c8c8c"/>
 <path d="M30 4H42L46 8V17H30Z" fill="url(#pg)"/>
 <rect x="30" y="3" width="13" height="1" fill="#161616"/>
 
 <path d="M42 3H43L46 7V9H42Z" fill="#161616" shape-rendering="auto"/><path d="M43 4.5L45.3 7.8H43Z" fill="#e8e8e8" shape-rendering="auto"/>
 
 <rect x="37" y="5" width="2" height="1" fill="#111"/>
 <rect x="37" y="8" width="2" height="1" fill="#111"/>
 <rect x="36" y="6" width="1" height="2" fill="#111"/>
 <rect x="39" y="6" width="1" height="2" fill="#111"/>
 <rect x="37" y="6" width="2" height="2" fill="#fff"/>
 <rect x="34" y="9" width="8" height="1" fill="#111"/>
 <rect x="34" y="9" width="1" height="5" fill="#111"/>
 <rect x="41" y="9" width="1" height="5" fill="#111"/>
 <rect x="35" y="10" width="1" height="3" fill="#c4c4c4"/>
 <rect x="40" y="10" width="1" height="3" fill="#c4c4c4"/>
 <rect x="34" y="13" width="3" height="1" fill="#111"/>
 <rect x="39" y="13" width="3" height="1" fill="#111"/>
 <rect x="36" y="9" width="1" height="8" fill="#111"/>
 <rect x="39" y="9" width="1" height="8" fill="#111"/>
 <rect x="37" y="10" width="2" height="7" fill="#8c8c8c"/>
</svg>

<!-- chain -->
<svg class="a" style="left:884px;top:420px" width="24" height="24">
 <path d="M9.2 10.5V8.2A2.8 2.8 0 0 1 14.8 8.2V10.5 M9.2 13.5V15.8A2.8 2.8 0 0 0 14.8 15.8V13.5" fill="none" stroke="#d2d2d2" stroke-width="2.2"/>
 <rect x="10.5" y="7.5" width="3" height="9" rx="1.2" fill="#1a1a1a"/>
 <rect x="11.3" y="8.8" width="1.4" height="6.4" fill="#c8c8c8"/>
</svg>

<!-- mouse cursor -->
<svg class="a" style="left:587px;top:278px" width="14" height="20">
 <path d="M1 1V15.5L4.5 12.2L7 18L9.2 17L6.8 11.5H11.2Z" fill="#fff" stroke="#000" stroke-width="1" stroke-linejoin="miter"/>
</svg>
</body></html>
